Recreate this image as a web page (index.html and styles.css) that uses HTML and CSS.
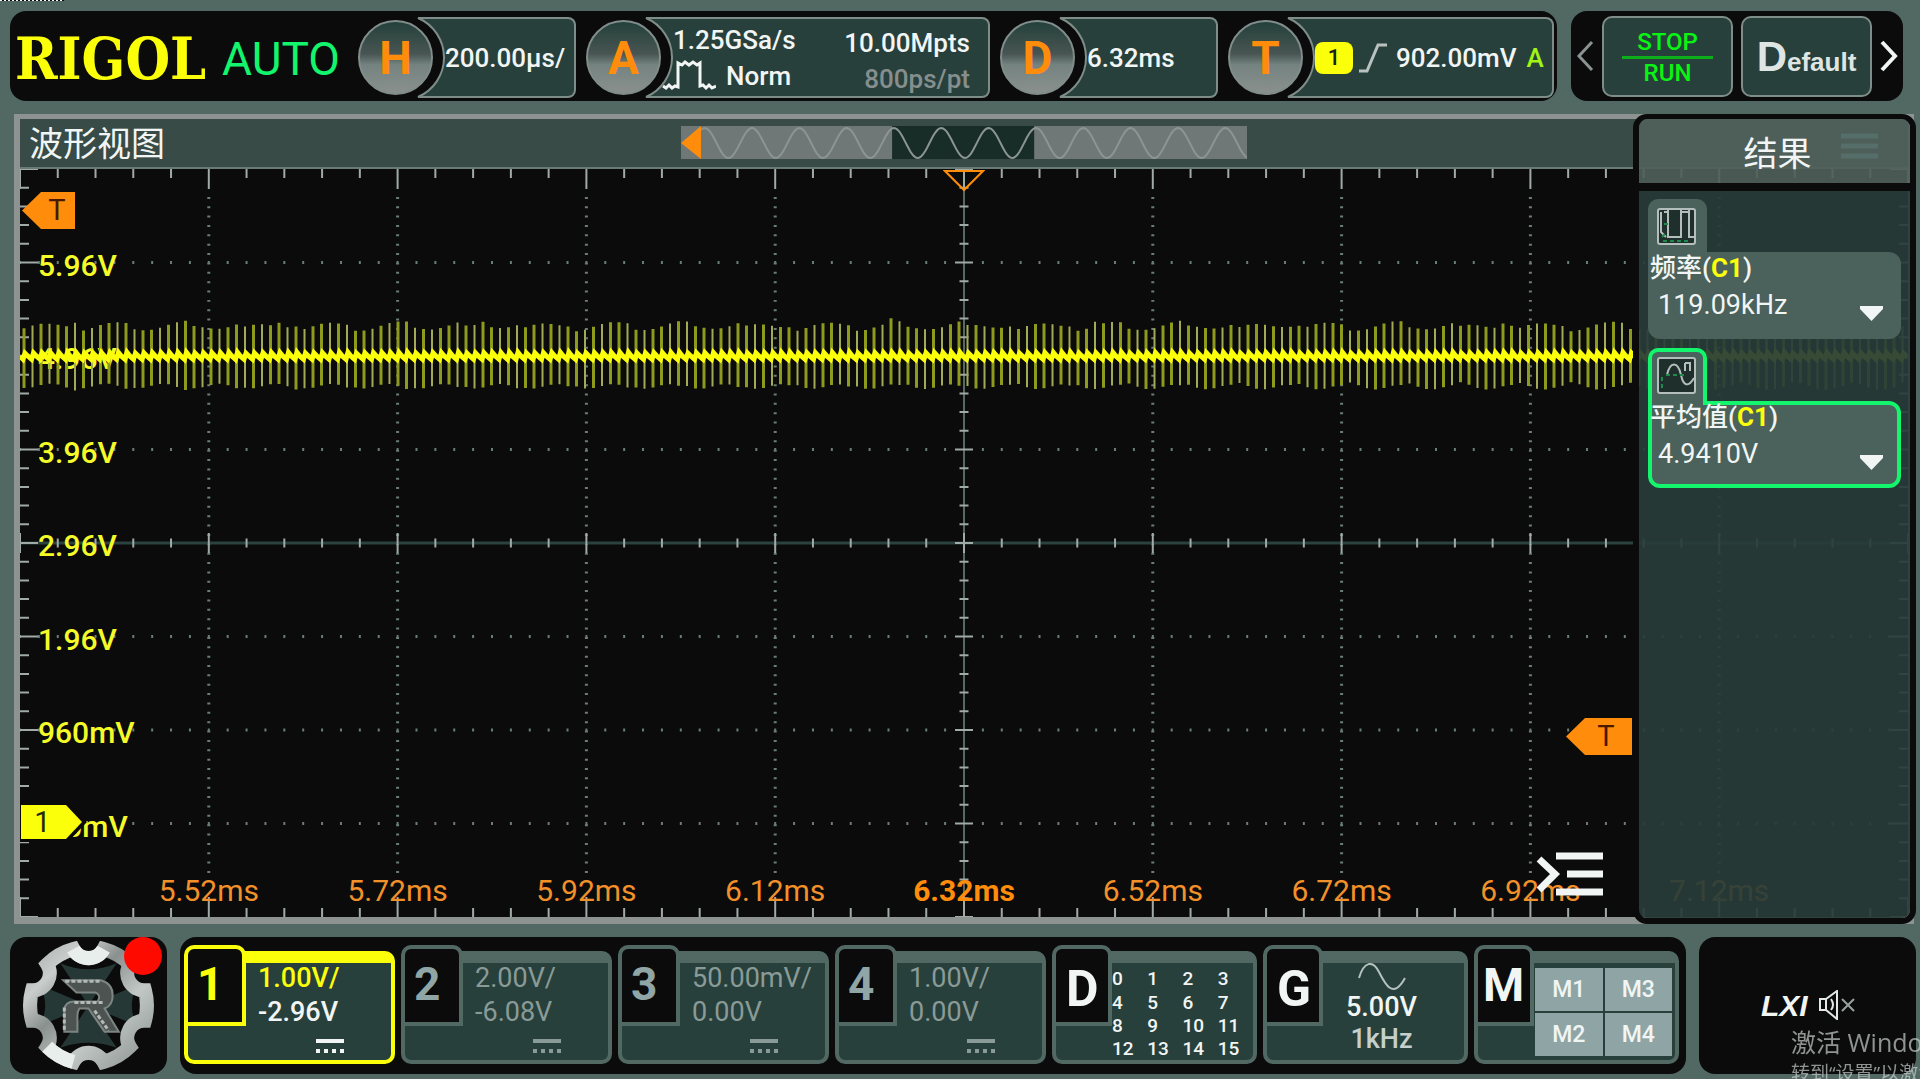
FILE: index.html
```html
<!DOCTYPE html>
<html lang="zh-CN">
<head>
    <meta charset="UTF-8">
    <meta name="viewport" content="width=device-width, initial-scale=1.0">
    <title>RIGOL</title>
    <link rel="stylesheet" href="styles.css">
</head>
<body>
    <header class="topbar">
        <div class="bar status-bar">
            <h1 class="brand">RIGOL</h1>
            <span class="mode">AUTO</span>

            <div class="group">
                <button class="knob">H</button>
                <svg class="cap" viewBox="0 0 28 81"><path class="cap-fill" d="M1 1A43 43 0 0 1 1 80H28V1Z"/><path class="cap-line" d="M28 1H1A43 43 0 0 1 1 80H28"/></svg>
                <div class="readout">200.00µs/</div>
            </div>

            <div class="group group-acquire">
                <button class="knob">A</button>
                <svg class="cap" viewBox="0 0 28 81"><path class="cap-fill" d="M1 1A43 43 0 0 1 1 80H28V1Z"/><path class="cap-line" d="M28 1H1A43 43 0 0 1 1 80H28"/></svg>
                <div class="readout readout-split">
                    <div class="acquire-left">
                        <span>1.25GSa/s</span>
                        <span class="acquire-mode">
                            <svg class="pulse-icon" viewBox="0 0 54 30"><path d="M1 26l3 2 3-3 3 3 3-2 3 1V3l4 2 3-3 4 3 4-3 4 3 3-2v23l3-1 3 3 3-3 3 3 4-2"/></svg>
                            <span>Norm</span>
                        </span>
                    </div>
                    <div class="acquire-right">
                        <span>10.00Mpts</span>
                        <span class="muted">800ps/pt</span>
                    </div>
                </div>
            </div>

            <div class="group">
                <button class="knob">D</button>
                <svg class="cap" viewBox="0 0 28 81"><path class="cap-fill" d="M1 1A43 43 0 0 1 1 80H28V1Z"/><path class="cap-line" d="M28 1H1A43 43 0 0 1 1 80H28"/></svg>
                <div class="readout">6.32ms</div>
            </div>

            <div class="group group-trigger">
                <button class="knob">T</button>
                <svg class="cap" viewBox="0 0 28 81"><path class="cap-fill" d="M1 1A43 43 0 0 1 1 80H28V1Z"/><path class="cap-line" d="M28 1H1A43 43 0 0 1 1 80H28"/></svg>
                <div class="readout">
                    <span class="source">1</span>
                    <svg class="edge-icon" viewBox="0 0 30 32"><path d="M1 29h8L20 3h9"/></svg>
                    <span>902.00mV</span>
                    <span class="trigger-mode">A</span>
                </div>
            </div>
        </div>

        <nav class="bar action-bar">
            <button class="arrow" aria-label="Previous"><svg viewBox="0 0 18 32"><path d="M16 2L3 16l13 14"/></svg></button>
            <button class="action run"><span>STOP</span><span>RUN</span></button>
            <button class="action default"><span class="initial">D</span>efault</button>
            <button class="arrow arrow-next" aria-label="Next"><svg viewBox="0 0 18 32"><path d="M2 2l13 14L2 30"/></svg></button>
        </nav>
    </header>

    <main class="scope">
        <div class="scope-head">
            <h2>波形视图</h2>
            <svg class="overview" viewBox="0 0 566 33">
                <rect class="strip" width="566" height="33"/>
                <rect class="window" x="211" width="142" height="33"/>
                <path id="overview-wave"/>
                <path class="pointer" d="M0 17L20 0v33z"/>
            </svg>
        </div>
        <div class="plot">
            <svg class="graticule" viewBox="0 0 1888 751" preserveAspectRatio="none">
                <path id="dots-v" class="dots"/>
                <path id="dots-h" class="dots"/>
                <path class="axis-x" d="M0 375.5H1888"/>
                <path class="axis-y" d="M944 0V751"/>
                <path id="ticks" class="ticks"/>
            </svg>
            <div class="volts">
                <span>5.96V</span>
                <span>4.96V</span>
                <span>3.96V</span>
                <span>2.96V</span>
                <span>1.96V</span>
                <span>960mV</span>
                <span>-40mV</span>
            </div>
            <div class="times">
                <span>5.52ms</span>
                <span>5.72ms</span>
                <span>5.92ms</span>
                <span>6.12ms</span>
                <span class="current">6.32ms</span>
                <span>6.52ms</span>
                <span>6.72ms</span>
                <span>6.92ms</span>
                <span>7.12ms</span>
            </div>
            <svg class="trace" viewBox="0 0 1888 751" preserveAspectRatio="none">
                <path id="spikes" class="spikes"/>
                <path id="spikes-thin" class="spikes-thin"/>
                <path id="wave" class="wave"/>
            </svg>
            <svg class="trigger-pos" viewBox="0 0 42 24"><path d="M2 2h38L21 21z"/></svg>
            <div class="flag flag-trigger-left">T</div>
            <div class="flag flag-trigger-right">T</div>
            <div class="flag-outline"><div class="flag flag-channel">1</div></div>
            <button class="list-toggle" aria-label="Hide results">
                <svg viewBox="0 0 68 46"><path d="M3 8l16 15L3 39M20 5h47M31 23h36M20 41h47"/></svg>
            </button>
        </div>

        <aside class="results">
            <div class="results-head">
                <h2>结果</h2>
                <svg class="results-menu" viewBox="0 0 37 26"><path d="M0 3h37M0 13h37M0 23h37"/></svg>
            </div>
            <div class="results-body">
                <section class="measure">
                    <div class="measure-tab">
                        <svg viewBox="0 0 39 37"><rect x="1" y="1" width="37" height="35" rx="2"/><path d="M11 2v27h13V2M32 2v27h5M4 4v20l5 5M24 4h8M11 4H7"/><path class="green" d="M6 33h25M5 29l3-3M7 16h5"/></svg>
                    </div>
                    <div class="measure-card">
                        <h3>频率(<b>C1</b>)</h3>
                        <p>119.09kHz</p>
                        <button class="expand" aria-label="展开 频率"></button>
                    </div>
                </section>
                <section class="measure selected">
                    <div class="measure-tab">
                        <svg viewBox="0 0 39 37"><rect x="1" y="1" width="37" height="35" rx="2"/><path d="M10 18C13 4 21 4 24 18s9 10 13 3M28 6v8M33 5v9M28 6h5"/><path class="green" d="M5 20v12M9 18h20"/></svg>
                    </div>
                    <div class="measure-card">
                        <h3>平均值(<b>C1</b>)</h3>
                        <p>4.9410V</p>
                        <button class="expand" aria-label="展开 平均值"></button>
                    </div>
                </section>
            </div>
        </aside>
    </main>

    <footer class="bottombar">
        <button class="bar home" aria-label="Menu">
            <svg viewBox="0 0 132 128">
                <defs>
                    <linearGradient id="metal" x1="0" y1="0" x2="1" y2="1">
                        <stop offset="0" stop-color="#aab0ae"/>
                        <stop offset=".2" stop-color="#c9cecc"/>
                        <stop offset=".4" stop-color="#8a908e"/>
                        <stop offset=".65" stop-color="#c2c8c6"/>
                        <stop offset="1" stop-color="#8f9593"/>
                    </linearGradient>
                </defs>
                <path class="gear-face" d="M66 64L38 22Q66 34 94 22zM66 64L18 44Q28 64 18 84zM66 64L114 44Q104 64 114 84zM66 64L38 106Q66 96 94 106z"/>
                <path class="gear" d="M81 8A58 58 0 0 1 107 23A17 17 0 0 0 122 49A58 58 0 0 1 122 79A17 17 0 0 0 107 105A58 58 0 0 1 81 120A17 17 0 0 0 51 120A58 58 0 0 1 25 105A17 17 0 0 0 10 79A58 58 0 0 1 10 49A17 17 0 0 0 25 23A58 58 0 0 1 51 8A17 17 0 0 0 81 8Z"/>
                <path class="gear-shine" d="M51 8A17 17 0 0 0 81 8M51 120A58 58 0 0 1 25 105"/>
                <path class="emblem" d="M41 39H78Q90 42 90 54Q90 64 82 67L96 90H82L66 67H57Q55 70 55 74V90H42V68Q43 60 52 60H75Q79 54 73 51H54Z"/>
                <path class="emblem-shine" d="M43 40h34M52 61h28M42 66v24M72 69l14 20"/>
            </svg>
            <span class="notice"></span>
        </button>

        <div class="bar channels">
            <button class="channel active">
                <span class="tab">1</span>
                <span class="channel-card">
                    <span class="scale">1.00V/</span>
                    <span class="offset">-2.96V</span>
                    <svg class="dc" viewBox="0 0 28 14"><path d="M0 2h28"/><path class="dashes" d="M0 12h28"/></svg>
                </span>
            </button>
            <button class="channel">
                <span class="tab">2</span>
                <span class="channel-card">
                    <span class="scale">2.00V/</span>
                    <span class="offset">-6.08V</span>
                    <svg class="dc" viewBox="0 0 28 14"><path d="M0 2h28"/><path class="dashes" d="M0 12h28"/></svg>
                </span>
            </button>
            <button class="channel">
                <span class="tab">3</span>
                <span class="channel-card">
                    <span class="scale">50.00mV/</span>
                    <span class="offset">0.00V</span>
                    <svg class="dc" viewBox="0 0 28 14"><path d="M0 2h28"/><path class="dashes" d="M0 12h28"/></svg>
                </span>
            </button>
            <button class="channel">
                <span class="tab">4</span>
                <span class="channel-card">
                    <span class="scale">1.00V/</span>
                    <span class="offset">0.00V</span>
                    <svg class="dc" viewBox="0 0 28 14"><path d="M0 2h28"/><path class="dashes" d="M0 12h28"/></svg>
                </span>
            </button>
            <button class="channel function">
                <span class="tab">D</span>
                <span class="channel-card digital">
                    <span>0</span><span>1</span><span>2</span><span>3</span>
                    <span>4</span><span>5</span><span>6</span><span>7</span>
                    <span>8</span><span>9</span><span>10</span><span>11</span>
                    <span>12</span><span>13</span><span>14</span><span>15</span>
                </span>
            </button>
            <button class="channel function">
                <span class="tab">G</span>
                <span class="channel-card generator">
                    <svg viewBox="0 0 48 28"><path d="M1 15C6-2 15-3 21 9S35 37 47 15"/></svg>
                    <span>5.00V</span>
                    <span class="frequency">1kHz</span>
                </span>
            </button>
            <button class="channel function">
                <span class="tab">M</span>
                <span class="channel-card math">
                    <span>M1</span><span>M3</span>
                    <span>M2</span><span>M4</span>
                </span>
            </button>
        </div>

        <div class="bar system">
            <span class="lxi">LXI</span>
            <svg class="speaker" viewBox="0 0 38 30"><path d="M2 9v11h6l11 9V1L8 9zM8 9v11M13 9q4 6 0 11"/><path class="cross" d="M24 9l12 12M36 9L24 21"/></svg>
        </div>
    </footer>

    <div class="watermark">
        <p>激活 Windows</p>
        <p class="small">转到“设置”以激活 Windows。</p>
    </div>
    <div class="cursor-strip"></div>

    <script src="script.js"></script>
</body>
</html>
```
FILE: styles.css
```css
* {
    box-sizing: border-box;
}
body {
    margin: 0;
    min-height: 100vh;
    padding: 11px 4px 6px 10px;
    display: grid;
    grid-template-rows: 90px 1fr 136px;
    row-gap: 13px;
    overflow: hidden;
    background: #526963;
    color: #f1f5f4;
    font-family: Roboto, "Noto Sans CJK SC", sans-serif;
    font-size: 27px;
    line-height: 32px;
}
h1, h2, h3, p {
    margin: 0;
    font-weight: 400;
}
button {
    border: 0;
    padding: 0;
    background: none;
    color: inherit;
    font: inherit;
    cursor: pointer;
}
svg {
    display: block;
    fill: none;
}
.bar {
    background: #0b0b0b;
    border-radius: 16px;
}

/* top bar */
.topbar {
    display: grid;
    grid-template-columns: 1fr 332px;
    column-gap: 14px;
    margin-right: 13px;
}
.status-bar {
    display: flex;
    align-items: center;
    gap: 10px;
    min-width: 0;
    padding: 2px 3px 0 5px;
}
.brand {
    width: 197px;
    padding-top: 4px;
    color: #fbff0a;
    font-family: "DejaVu Serif Condensed", "DejaVu Serif", serif;
    font-size: 57px;
    font-weight: 700;
    line-height: 80px;
}
.mode {
    width: 126px;
    padding-top: 4px;
    color: #12f56c;
    font-size: 46px;
    line-height: 56px;
}
.group {
    display: flex;
    align-items: center;
    flex: 218 1 0;
    min-width: 0;
    white-space: nowrap;
}
.group-acquire {
    flex-grow: 404;
}
.group-trigger {
    flex-grow: 326;
}
.knob {
    flex: none;
    width: 75px;
    height: 75px;
    margin-right: -16px;
    padding-top: 2px;
    border: 2px solid #808d8a;
    border-radius: 50%;
    background: linear-gradient(#24403a, #485553 45%, #74837f 60%, #8a908e);
    color: #ff8c0a;
    font-size: 46px;
    font-weight: 700;
}
.cap {
    flex: none;
    width: 28px;
    height: 81px;
}
.cap-fill {
    fill: #28403c;
}
.cap-line {
    stroke: #7f8d89;
    stroke-width: 2;
}
.readout {
    flex: 1;
    display: flex;
    align-items: center;
    height: 81px;
    min-width: 0;
    padding-top: 2px;
    border: 2px solid #7f8d89;
    border-left: 0;
    border-radius: 0 8px 8px 0;
    background: #28403c;
    font-size: 26px;
    font-weight: 500;
}
.readout-split {
    justify-content: space-between;
    padding-right: 18px;
}
.acquire-left, .acquire-right {
    display: flex;
    flex-direction: column;
    gap: 4px;
}
.acquire-right {
    text-align: right;
    padding-top: 6px;
}
.acquire-mode {
    display: flex;
    gap: 10px;
    margin-left: -11px;
}
.pulse-icon {
    width: 54px;
    height: 30px;
    stroke: #f1f5f4;
    stroke-width: 3;
}
.muted {
    color: #868f8d;
}
.source {
    width: 38px;
    border-radius: 8px;
    background: #fbff0a;
    color: #16211c;
    font-size: 22px;
    text-align: center;
}
.edge-icon {
    width: 30px;
    height: 32px;
    margin: 0 8px 0 5px;
    stroke: #b9c2bf;
    stroke-width: 3;
}
.trigger-mode {
    margin-left: 10px;
    color: #a0f514;
}
.action-bar {
    display: grid;
    grid-template-columns: 18px 1fr 1fr 18px;
    align-items: center;
    column-gap: 8px;
    padding: 0 5px;
}
.arrow svg {
    width: 18px;
    height: 32px;
    stroke: #8a9391;
    stroke-width: 3;
}
.arrow-next svg {
    stroke: #f1f5f4;
    stroke-width: 4;
}
.action {
    height: 81px;
    padding-top: 2px;
    border: 2px solid #7f8d89;
    border-radius: 10px;
    background: #28403c;
    white-space: nowrap;
}
.run {
    color: #08f514;
    font-size: 24px;
    font-weight: 500;
    line-height: 28px;
}
.run span {
    display: block;
    width: 91px;
    margin: 0 auto;
}
.run span:first-child {
    border-bottom: 3px solid #0cae1c;
}
.default {
    padding-top: 6px;
    color: #dfe5e3;
    font-family: "Liberation Sans", sans-serif;
    font-size: 26px;
    font-weight: 700;
}
.initial {
    font-size: 42px;
}

/* waveform view */
.scope {
    position: relative;
    display: flex;
    flex-direction: column;
    min-height: 0;
    margin: 0 2px 0 4px;
    border: 6px solid #8c9391;
    border-top-width: 5px;
    border-bottom-width: 7px;
    background: #0b0b0b;
}
.scope-head {
    display: grid;
    grid-template-columns: 1fr 30% 1fr;
    align-items: center;
    height: 50px;
    background: #384b47;
    border-bottom: 2px solid #6a7b76;
}
.scope h2 {
    font-size: 34px;
    line-height: 40px;
}
.scope-head h2 {
    padding: 2px 0 0 9px;
}
.strip {
    fill: #6f7877;
}
.window {
    fill: #182c28;
}
#overview-wave {
    stroke: #8b9593;
    stroke-width: 2;
}
.pointer {
    fill: #ff8c0a;
}
.plot {
    position: relative;
    flex: 1;
    min-height: 0;
}
.graticule, .trace {
    position: absolute;
    inset: 0;
    width: 100%;
    height: 100%;
}
.dots {
    stroke: #6b7d78;
    stroke-width: 3;
}
#dots-v {
    stroke-dasharray: 2 7.4;
}
#dots-h {
    stroke-dasharray: 2 16.88;
}
.axis-x {
    stroke: #2b423e;
    stroke-width: 3;
}
.axis-y {
    stroke: #586965;
    stroke-width: 2;
}
.ticks {
    stroke: #a0aaa7;
    stroke-width: 2;
}
.wave {
    stroke: #fbff0a;
    stroke-width: 5;
}
.spikes {
    stroke: #8d9a1c;
    stroke-width: 3;
}
.spikes-thin {
    stroke: #a3aa55;
    stroke-width: 2;
}
.volts, .times {
    position: absolute;
    display: grid;
    font-size: 30px;
    font-weight: 500;
}
.volts {
    top: 3px;
    bottom: -3px;
    left: 18px;
    grid-template-rows: 1fr repeat(7, 2fr) 1fr;
    align-items: center;
    color: #f5fb28;
}
.volts::before, .times::before {
    content: "";
}
.times {
    left: 0;
    right: 0;
    bottom: 10px;
    grid-template-columns: 1fr repeat(9, 2fr) 1fr;
    color: #f2902a;
    font-weight: 400;
    text-align: center;
}
.current {
    color: #ff8c0a;
    font-weight: 700;
}
.trigger-pos {
    position: absolute;
    top: 0;
    left: 50%;
    width: 42px;
    margin-left: -21px;
    stroke: #ff8c0a;
    stroke-width: 2;
}
.flag {
    height: 37px;
    background: #ff8c0a;
    color: #4a1a00;
    font-size: 29px;
    line-height: 37px;
    text-align: center;
}
.flag-trigger-left {
    position: absolute;
    top: 23px;
    left: 2px;
    width: 53px;
    padding-left: 17px;
    clip-path: polygon(0 50%, 19px 0, 100% 0, 100% 100%, 19px 100%);
}
.flag-trigger-right {
    position: absolute;
    bottom: 162px;
    right: 276px;
    width: 66px;
    padding-left: 14px;
    clip-path: polygon(0 50%, 19px 0, 100% 0, 100% 100%, 19px 100%);
}
.flag-outline {
    position: absolute;
    bottom: 75px;
    left: 0;
    width: 67px;
    padding: 3px 5px 3px 1px;
    background: #0b0b0b;
    clip-path: polygon(0 0, 48px 0, 100% 50%, 48px 100%, 0 100%);
}
.flag-channel {
    height: 34px;
    padding-right: 18px;
    background: #fbff0a;
    color: #1f2a10;
    line-height: 34px;
    clip-path: polygon(0 0, 45px 0, 100% 50%, 45px 100%, 0 100%);
}
.list-toggle {
    position: absolute;
    right: 304px;
    bottom: 20px;
    width: 68px;
}
.list-toggle svg {
    stroke: #f1f5f4;
    stroke-width: 7;
}

/* results panel */
.results {
    position: absolute;
    top: -5px;
    right: -8px;
    bottom: -7px;
    display: flex;
    flex-direction: column;
    width: 283px;
    border: 6px solid #0b0b0b;
    border-top-width: 5px;
    border-radius: 14px;
    overflow: hidden;
}
.results-head {
    position: relative;
    height: 72px;
    padding: 15px 0 0 6px;
    border-bottom: 8px solid #0b0b0b;
    background: rgba(80, 95, 91, 0.92);
    background-clip: padding-box;
    text-align: center;
}
.results-menu {
    position: absolute;
    top: 14px;
    right: 32px;
    width: 37px;
    stroke: #566e69;
    stroke-width: 5;
}
.results-body {
    flex: 1;
    padding: 8px 9px;
    background: rgba(40, 60, 57, 0.93);
}
.measure {
    margin-bottom: 9px;
}
.measure-tab {
    position: relative;
    width: 59px;
    height: 57px;
    margin-bottom: -4px;
    padding: 9px 0 0 9px;
    border-radius: 10px 10px 0 0;
    background: #4a625b;
}
.measure-tab svg {
    width: 39px;
    height: 37px;
    stroke: #b4bfbb;
    stroke-width: 2;
}
.measure-tab rect {
    fill: #1f2f2c;
}
.measure-tab .green {
    stroke: #1f8a4c;
    stroke-dasharray: 4 3;
}
.measure-card {
    position: relative;
    height: 87px;
    padding-left: 2px;
    border-radius: 0 12px 12px;
    background: #4a625b;
    font-weight: 500;
}
.measure-card h3 {
    position: relative;
    font-size: 26px;
    font-weight: 500;
    line-height: 32px;
}
.measure-card b {
    color: #fbff0a;
}
.measure-card p {
    padding-left: 8px;
    line-height: 42px;
}
.expand {
    position: absolute;
    right: 18px;
    bottom: 18px;
    width: 23px;
    height: 15px;
    background: #f1f5f4;
    clip-path: polygon(0 0, 100% 0, 100% 20%, 50% 100%, 0 20%);
}
.selected .measure-tab {
    z-index: 1;
    padding: 5px 0 0 5px;
    border: 4px solid #12f56c;
    border-bottom: 0;
}
.selected .measure-card {
    padding-left: 0;
    border: 4px solid #12f56c;
}
.selected .measure-card h3 {
    z-index: 1;
    margin: -4px 0 0 -2px;
}
.selected .measure-card p {
    padding-left: 6px;
}
.selected .expand {
    right: 14px;
    bottom: 14px;
}

/* bottom bar */
.bottombar {
    display: grid;
    grid-template-columns: 157px 1fr 217px;
    column-gap: 13px;
}
.home {
    position: relative;
    padding: 4px 12px;
}
.gear-face {
    fill: #263835;
}
.gear {
    stroke: url(#metal);
    stroke-width: 14;
}
.gear-shine {
    stroke: #e8eeec;
    stroke-width: 14;
}
.emblem {
    fill: #4c5351;
    stroke: #7d8583;
    stroke-width: 2;
}
.emblem-shine {
    stroke: #b2b9b7;
    stroke-width: 3;
    stroke-dasharray: 4 2;
}
.notice {
    position: absolute;
    top: 0;
    right: 5px;
    width: 38px;
    height: 38px;
    border-radius: 50%;
    background: #ff0a00;
}
.channels {
    display: flex;
    gap: 6px;
    padding: 8px 7px 9px 4px;
    min-width: 0;
}
.channel {
    --line: #526963;
    position: relative;
    flex: 211 1 0;
    min-width: 0;
    padding-top: 6px;
    color: #8a9b97;
    text-align: left;
    white-space: nowrap;
}
.tab {
    position: absolute;
    top: 0;
    left: 0;
    width: 62px;
    height: 81px;
    border: 4px solid var(--line);
    border-radius: 10px 10px 0 0;
    background: #0b0b0b;
    color: #90a5a5;
    font-size: 46px;
    font-weight: 700;
    line-height: 70px;
    padding-left: 9px;
}
.channel-card {
    display: flex;
    flex-direction: column;
    height: 113px;
    padding: 0 0 0 70px;
    border: 4px solid var(--line);
    border-top-width: 12px;
    border-radius: 10px;
    background: #28403c;
}
.scale, .offset {
    line-height: 34px;
}
.scale {
    margin-top: -2px;
}
.dc {
    width: 28px;
    height: 14px;
    margin: 10px 0 0 58px;
    stroke: currentColor;
    stroke-width: 4;
}
.dashes {
    stroke-dasharray: 4 4;
}
.active {
    --line: #fbff0a;
    color: #f1f5f4;
    font-weight: 500;
}
.active .tab, .active .scale {
    color: #fbff0a;
}
.function {
    flex-grow: 205;
    color: #f1f5f4;
}
.function .tab {
    width: 60px;
    padding-left: 10px;
    color: #f1f5f4;
    font-size: 50px;
    line-height: 80px;
}
.function:last-child .tab {
    padding-left: 5px;
    font-size: 47px;
    line-height: 72px;
}
.digital {
    display: grid;
    grid-template-columns: repeat(4, 1fr);
    padding: 4px 0 0 56px;
    font-size: 19px;
    font-weight: 500;
    line-height: 23px;
}
.generator {
    align-items: center;
    padding: 0 0 0 32px;
    font-weight: 500;
}
.generator svg {
    width: 48px;
    height: 28px;
    stroke: #b4c2be;
    stroke-width: 2;
}
.frequency {
    color: #c5cfcc;
}
.math {
    display: grid;
    grid-template-columns: 1fr 1fr;
    grid-auto-rows: 43px;
    gap: 2px;
    padding: 5px 3px 0 57px;
}
.math span {
    background: #8fa5a5;
    font-size: 23px;
    font-weight: 500;
    line-height: 43px;
    text-align: center;
}
.system {
    display: flex;
    gap: 14px;
    padding: 53px 0 0 62px;
}
.lxi {
    width: 43px;
    font-family: "Liberation Sans", sans-serif;
    font-size: 30px;
    font-style: italic;
    font-weight: 700;
}
.speaker {
    width: 38px;
    height: 30px;
    stroke: #e2e8e6;
    stroke-width: 2;
}
.cross {
    stroke: #98a19f;
}

.watermark {
    position: fixed;
    left: calc(100% - 129px);
    top: calc(100% - 53px);
    width: 129px;
    height: 53px;
    overflow: hidden;
    color: rgba(200, 206, 204, 0.7);
    font-family: "Open Sans", "Noto Sans CJK SC", sans-serif;
    font-size: 25px;
    white-space: nowrap;
}
.watermark .small {
    font-size: 19px;
    line-height: 30px;
}
.cursor-strip {
    position: fixed;
    top: 0;
    left: 0;
    width: 64px;
    height: 1px;
    background: repeating-linear-gradient(90deg, #f1f5f4 0 2px, #0b0b0b 2px 4px);
}
```
FILE: script.js
```js
const W = 1888, H = 751;
const divX = W / 10, divY = H / 8;

function setPath(id, d) {
    document.getElementById(id).setAttribute('d', d);
}

// graticule
let v = '', h = '', t = '';
for (let i = 1; i < 10; i++) {
    if (i !== 5) v += `M${i * divX} 28V${H - 28}`;
}
for (let i = 1; i < 8; i++) {
    if (i !== 4) h += `M-1 ${i * divY}H${W}`;
}
for (let i = 0; i <= 50; i++) {
    const x = i * divX / 5;
    const len = i % 5 ? 9 : 20;
    t += `M${x} 0v${len}M${x} ${H}v${-len}M${x} ${H / 2 - len / 2}v${len}`;
}
for (let i = 0; i <= 40; i++) {
    const y = i * divY / 5;
    const len = i % 5 ? 9 : 18;
    t += `M0 ${y}h${len}M${W} ${y}h${-len}M${W / 2 - len / 2} ${y}h${len}`;
}
setPath('dots-v', v);
setPath('dots-h', h);
setPath('ticks', t);

// channel 1: switching ripple around 4.96V
const mid = 188;
let wave = `M0 ${mid}`, wide = '', thin = '';
for (let n = 0, x = 4; x < W; n++, x += 8.5) {
    const jitter = (n * 7919 % 13) / 13;
    const up = 28 + 3 * Math.sin(n * 0.75) + 5 * jitter + (n % 24 === 6 ? 4 : 0);
    const down = 29 + 3 * Math.cos(n * 0.95) + 3 * jitter;
    const spike = `M${x} ${mid - up}V${mid + down}`;
    if (n % 5 % 2) thin += spike; else wide += spike;
    wave += `L${x - 1} ${mid + 3}L${x + 1} ${mid - 3 - jitter}L${x + 4} ${mid}`;
}
wave += `L${W} ${mid + 1}`;
setPath('spikes', wide);
setPath('spikes-thin', thin);
setPath('wave', wave);

// memory overview sine
let sine = '';
for (let x = 20; x <= 566; x += 2) {
    const y = 17 - 15 * Math.cos((x - 71) / 47.3 * 2 * Math.PI);
    sine += (sine ? 'L' : 'M') + x + ' ' + y.toFixed(1);
}
setPath('overview-wave', sine);
```
